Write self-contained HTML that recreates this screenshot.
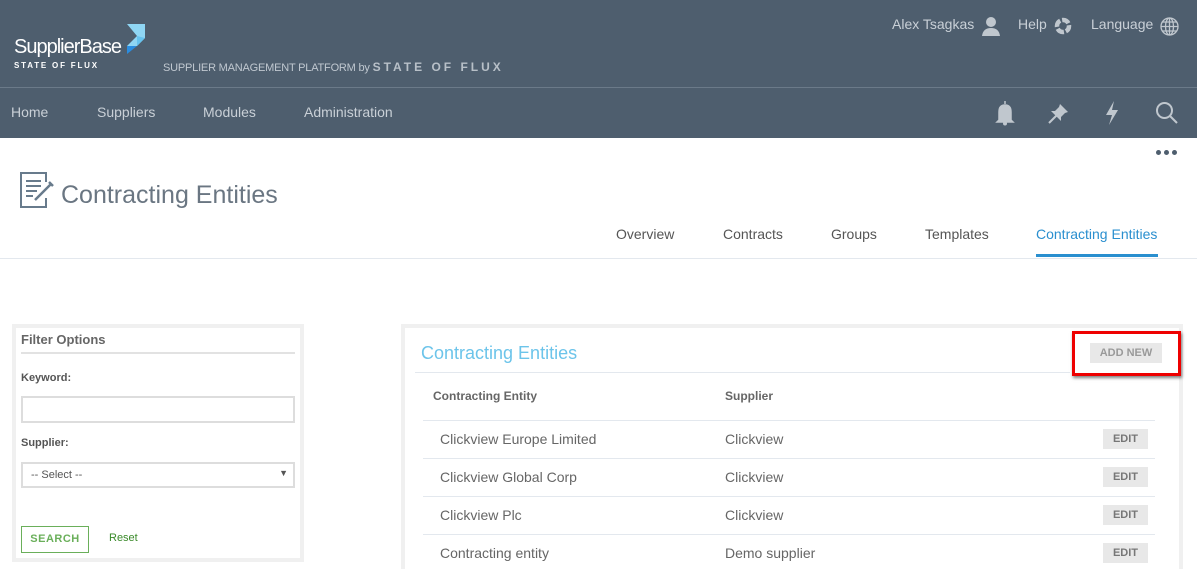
<!DOCTYPE html>
<html><head><meta charset="utf-8"><style>
*{box-sizing:border-box;margin:0;padding:0}
html,body{width:1197px;height:569px;overflow:hidden}
body{background:#fff;font-family:"Liberation Sans",Arial,sans-serif;position:relative}
.a{position:absolute;white-space:nowrap}
.hdr{left:0;top:0;width:1197px;height:138px;background:#4e5e6e}
.hl{left:0;top:87px;width:1197px;height:1px;background:#6b7a89}
.nav{top:104px;color:#c9d0d7;font-size:14px}
.top{top:16px;color:#c9d0d7;font-size:14px}
.tab{top:226px;font-size:14px;color:#555}
.row{left:423px;width:732px;height:1px;background:#e3e8ee}
.c{font-size:14px;color:#666}
.edit{left:1103px;width:45px;height:20px;background:#e8e8e8;color:#777;font-size:11px;font-weight:bold;text-align:center;line-height:20px}
</style></head><body>
<div class="a hdr"></div>
<div class="a hl"></div>
<div class="a" style="left:14px;top:36px;color:#fff;font-size:20px;letter-spacing:-1px">SupplierBase</div>
<svg class="a" style="left:127px;top:24px" width="18" height="30"><polygon points="0,0 18,0 18,14 10,22 0,22 10,12" fill="#8fd6f4"/><polygon points="0,22 10,22 0,30" fill="#2a8de0"/><polygon points="10,12 18,14 10,22" fill="#66c3ef"/></svg>
<div class="a" style="left:14px;top:61px;color:#fff;font-size:8px;font-weight:bold;letter-spacing:1.8px">STATE OF FLUX</div>
<div class="a" style="left:163px;top:60px;color:#c0c8d0;font-size:11px;letter-spacing:-0.2px">SUPPLIER MANAGEMENT PLATFORM <span>by</span> <b style="font-size:12px;letter-spacing:3px;color:#b8c0c8">STATE OF FLUX</b></div>
<div class="a top" style="left:892px">Alex Tsagkas</div>
<svg class="a" style="left:981px;top:16px" width="20" height="20"><circle cx="10" cy="6" r="5" fill="#c0c7ce"/><path d="M1 20 Q2 12 10 12 Q18 12 19 20Z" fill="#c0c7ce"/></svg>
<div class="a top" style="left:1018px">Help</div>
<svg class="a" style="left:1054px;top:17px" width="18" height="18"><circle cx="9" cy="9" r="6" fill="none" stroke="#c0c7ce" stroke-width="4.5" stroke-dasharray="7.4 2" stroke-dashoffset="1"/></svg>
<div class="a top" style="left:1091px">Language</div>
<svg class="a" style="left:1160px;top:17px" width="19" height="19" fill="none" stroke="#c0c7ce" stroke-width="1.3"><circle cx="9.5" cy="9.5" r="8.5"/><ellipse cx="9.5" cy="9.5" rx="4" ry="8.5"/><path d="M1 9.5H18M2.5 5H16.5M2.5 14H16.5M9.5 1V18"/></svg>
<div class="a nav" style="left:11px">Home</div>
<div class="a nav" style="left:97px">Suppliers</div>
<div class="a nav" style="left:203px">Modules</div>
<div class="a nav" style="left:304px">Administration</div>
<svg class="a" style="left:995px;top:100px" width="20" height="26"><path d="M10 1v3M4 20V12Q4 5 10 5Q16 5 16 12V20L18 22H2Z" fill="#c0c7ce" stroke="#c0c7ce" stroke-width="1.5"/><circle cx="10" cy="23.5" r="2" fill="#c0c7ce"/></svg>
<svg class="a" style="left:1047px;top:101px" width="24" height="24"><path d="M2 22L10 14" stroke="#c0c7ce" stroke-width="2"/><path d="M13 3L21 11L18 12L14 16L14 20L4 10L8 10L12 6Z" fill="#c0c7ce"/></svg>
<svg class="a" style="left:1104px;top:101px" width="16" height="24"><path d="M10 0L2 14H8L5 24L14 9H8Z" fill="#c0c7ce"/></svg>
<svg class="a" style="left:1155px;top:101px" width="24" height="24" fill="none" stroke="#c0c7ce" stroke-width="2"><circle cx="9.5" cy="9.5" r="7.5"/><path d="M15 15L22 22"/></svg>
<div class="a" style="left:1156px;top:150px;width:22px;height:6px"><span class="a" style="left:0;width:5px;height:5px;border-radius:50%;background:#4e5e6e"></span><span class="a" style="left:8px;width:5px;height:5px;border-radius:50%;background:#4e5e6e"></span><span class="a" style="left:16px;width:5px;height:5px;border-radius:50%;background:#4e5e6e"></span></div>
<svg class="a" style="left:20px;top:172px" width="34" height="36" fill="none" stroke="#687b8c" stroke-width="2"><path d="M26 10V1H1V35H26V26"/><path d="M6 9H21M6 14H21M6 19H17M6 24H13"/><path d="M15 28L31 12M29 10L33 14" stroke-width="2.5"/></svg>
<div class="a" style="left:61px;top:181px;font-size:25px;color:#6a7682">Contracting Entities</div>
<div class="a tab" style="left:616px">Overview</div>
<div class="a tab" style="left:723px">Contracts</div>
<div class="a tab" style="left:831px">Groups</div>
<div class="a tab" style="left:925px">Templates</div>
<div class="a tab" style="left:1036px;color:#2a8fcf">Contracting Entities</div>
<div class="a" style="left:1036px;top:254px;width:122px;height:3px;background:#2a8fcf"></div>
<div class="a" style="left:0;top:258px;width:1197px;height:1px;background:#e3e8ee"></div>
<div class="a" style="left:12px;top:324px;width:292px;height:238px;border:4px solid #f0f0f0"></div>
<div class="a" style="left:21px;top:332px;font-size:13px;font-weight:bold;color:#666">Filter Options</div>
<div class="a" style="left:21px;top:352px;width:274px;height:2px;background:#e2e2e2"></div>
<div class="a" style="left:21px;top:372px;font-size:11px;font-weight:bold;color:#555">Keyword:</div>
<div class="a" style="left:21px;top:396px;width:274px;height:27px;border:2px solid #ddd"></div>
<div class="a" style="left:21px;top:437px;font-size:11px;font-weight:bold;color:#555">Supplier:</div>
<div class="a" style="left:21px;top:462px;width:274px;height:26px;border:2px solid #ddd;font-size:11px;color:#555;padding:5px 0 0 8px">-- Select --<span class="a" style="right:5px;top:4px;font-size:9px">▼</span></div>
<div class="a" style="left:21px;top:526px;width:68px;height:27px;border:1px solid #6aaf5a;color:#6aaf5a;font-size:11px;font-weight:bold;text-align:center;line-height:25px;letter-spacing:.5px">SEARCH</div>
<div class="a" style="left:109px;top:532px;font-size:11px;color:#3a8a2a">Reset</div>
<div class="a" style="left:401px;top:324px;width:782px;height:245px;border:4px solid #f0f0f0;border-bottom:none"></div>
<div class="a" style="left:421px;top:343px;font-size:18px;color:#6cc4ea">Contracting Entities</div>
<div class="a" style="left:1090px;top:343px;width:72px;height:20px;background:#e8e8e8;color:#999;font-size:11px;font-weight:bold;text-align:center;line-height:20px">ADD NEW</div>
<div class="a" style="left:1072px;top:331px;width:109px;height:45px;border:3px solid #e00;box-shadow:1px 2px 3px rgba(0,0,0,.5)"></div>
<div class="a row" style="top:372px;left:415px;width:655px"></div>
<div class="a" style="left:433px;top:389px;font-size:12px;font-weight:bold;color:#666">Contracting Entity</div>
<div class="a" style="left:725px;top:389px;font-size:12px;font-weight:bold;color:#666">Supplier</div>
<div class="a row" style="top:420px"></div>
<div class="a c" style="left:440px;top:431px">Clickview Europe Limited</div><div class="a c" style="left:725px;top:431px">Clickview</div><div class="a edit" style="top:429px">EDIT</div>
<div class="a row" style="top:458px"></div>
<div class="a c" style="left:440px;top:469px">Clickview Global Corp</div><div class="a c" style="left:725px;top:469px">Clickview</div><div class="a edit" style="top:467px">EDIT</div>
<div class="a row" style="top:496px"></div>
<div class="a c" style="left:440px;top:507px">Clickview Plc</div><div class="a c" style="left:725px;top:507px">Clickview</div><div class="a edit" style="top:505px">EDIT</div>
<div class="a row" style="top:534px"></div>
<div class="a c" style="left:440px;top:545px">Contracting entity</div><div class="a c" style="left:725px;top:545px">Demo supplier</div><div class="a edit" style="top:543px">EDIT</div>
</body></html>
